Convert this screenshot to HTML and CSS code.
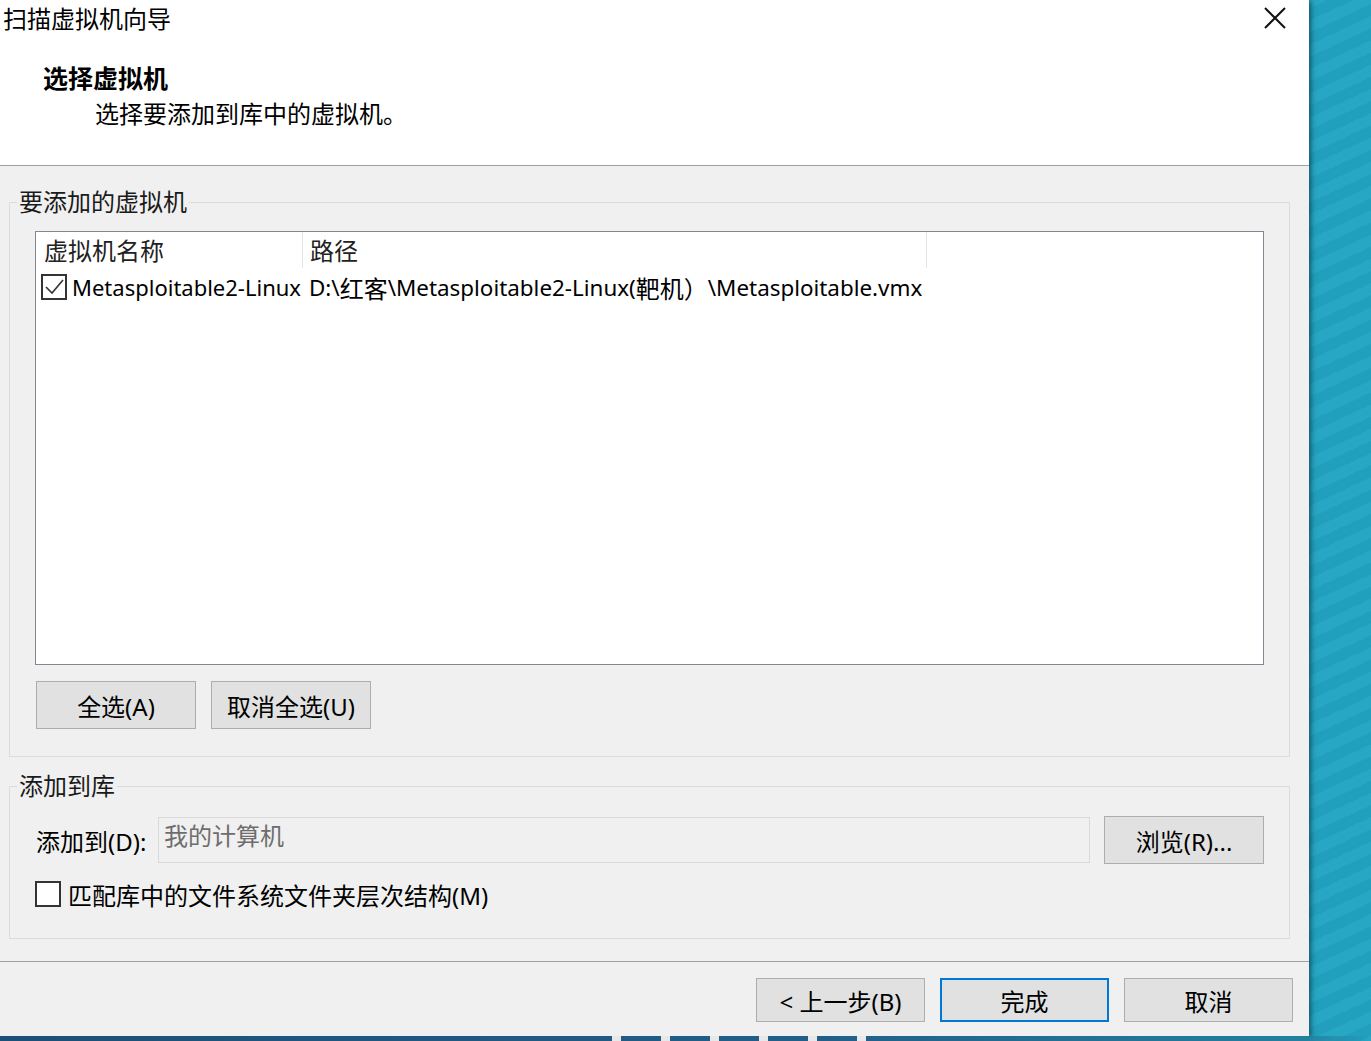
FILE: index.html
```html
<!DOCTYPE html>
<html lang="zh-CN">
<head>
    <meta charset="UTF-8">
    <title>扫描虚拟机向导</title>
    <link rel="stylesheet" href="styles.css">
</head>
<body>
    <div class="screen">
        <div class="dialog">
            <div class="header">
                <div class="titlebar">
                    <span class="title">扫描虚拟机向导</span>
                    <svg class="close" width="22" height="22" viewBox="0 0 22 22">
                        <path d="M1 1 L21 21 M21 1 L1 21" stroke="#111" stroke-width="2" fill="none"/>
                    </svg>
                </div>
                <div class="heading">选择虚拟机</div>
                <div class="subheading">选择要添加到库中的虚拟机。</div>
            </div>

            <div class="content">
                <!-- 要添加的虚拟机 -->
                <fieldset class="group group-vms">
                    <legend>要添加的虚拟机</legend>
                    <div class="listview">
                        <div class="list-row list-head">
                            <div class="col col-name">虚拟机名称</div>
                            <div class="col col-path">路径</div>
                        </div>
                        <div class="list-row list-item">
                            <div class="col col-name">
                                <span class="check">
                                    <svg width="22" height="22" viewBox="0 0 22 22">
                                        <path d="M3 11 L9 17 L20 4" stroke="#333" stroke-width="1.6" fill="none"/>
                                    </svg>
                                </span>
                                Metasploitable2-Linux
                            </div>
                            <div class="col col-path">D:\<span class="cjk">红客</span>\Metasploitable2-Linux(<span class="cjk">靶机）</span>\Metasploitable.vmx</div>
                        </div>
                    </div>
                    <div class="btn-row">
                        <button class="btn">全选(A)</button>
                        <button class="btn">取消全选(U)</button>
                    </div>
                </fieldset>

                <!-- 添加到库 -->
                <fieldset class="group group-lib">
                    <legend>添加到库</legend>
                    <div class="field-row">
                        <label class="field-label">添加到(D):</label>
                        <div class="field-input">我的计算机</div>
                        <button class="btn">浏览(R)...</button>
                    </div>
                    <div class="check-row">
                        <span class="check"></span>
                        匹配库中的文件系统文件夹层次结构(M)
                    </div>
                </fieldset>
            </div>

            <div class="footer">
                <button class="btn btn-wide">&lt; 上一步(B)</button>
                <button class="btn btn-wide btn-default">完成</button>
                <button class="btn btn-wide">取消</button>
            </div>
        </div>
        <div class="peek">
            <span></span><span></span><span></span><span></span><span></span><span></span>
        </div>
    </div>
</body>
</html>
```

FILE: styles.css
```css
body {
    margin: 0;
    font-family: "Noto Sans", "Noto Sans CJK SC", sans-serif;
    font-size: 24px;
    color: #000;
}
.screen {
    width: 1371px;
    height: 1041px;
    overflow: hidden;
    background: repeating-linear-gradient(155deg, #27a7c4 0 11px, #219fbc 11px 22px);
}
.dialog {
    width: 1309px;
    height: 1036px;
    background: #f0f0f0;
    display: flex;
    flex-direction: column;
    box-shadow: 2px 1px 5px rgba(10, 50, 70, 0.7);
}
.header {
    height: 165px;
    background: #fff;
    border-bottom: 1px solid #a0a0a0;
}
.titlebar {
    display: flex;
    justify-content: space-between;
    align-items: center;
    padding: 4px 23px 0 3px;
    height: 30px;
}
.title {
    font-size: 24px;
    line-height: 30px;
}
.close {
    margin-top: -2px;
}
.heading {
    margin: 29px 0 0 43px;
    font-size: 25px;
    font-weight: bold;
    line-height: 30px;
}
.subheading {
    margin: 6px 0 0 95px;
    line-height: 30px;
}
.content {
    flex: 1;
    padding: 0 19px 0 9px;
}
.group {
    margin: 0;
    border: 1px solid #dcdcdc;
    padding: 0 25px;
}
.group legend {
    padding: 0 2px;
    margin-left: -18px;
    line-height: 28px;
    color: #1a1a1a;
}
.group-vms {
    margin-top: 22px;
    padding-top: 15px;
    padding-bottom: 27px;
}
.listview {
    height: 432px;
    background: #fff;
    border: 1px solid #828790;
}
.list-row {
    display: grid;
    grid-template-columns: 267px 624px;
}
.list-head .col {
    height: 36px;
    line-height: 38px;
    padding-left: 8px;
    border-right: 1px solid #e5e5e5;
    color: #222;
}
.list-head .col-path {
    padding-left: 7px;
}
.list-item .col {
    height: 38px;
    display: flex;
    align-items: center;
    white-space: nowrap;
    font-size: 22px;
}
.list-item .col-name {
    padding-left: 5px;
}
.list-item .col-path {
    padding-left: 6px;
    font-size: 22.4px;
}
.cjk {
    font-size: 24px;
}
.check {
    width: 22px;
    height: 22px;
    border: 2px solid #333;
    background: #fff;
    display: inline-block;
    margin-right: 5px;
    flex: none;
}
.check svg {
    display: block;
}
.btn-row {
    display: flex;
    gap: 15px;
    margin-top: 16px;
    margin-left: 1px;
}
.btn {
    font-family: inherit;
    font-size: 24px;
    color: #000;
    width: 160px;
    height: 48px;
    background: #e1e1e1;
    border: 1px solid #adadad;
    padding: 0;
}
.group-lib {
    margin-top: 15px;
    padding-top: 16px;
    padding-bottom: 29px;
}
.field-row {
    display: flex;
    align-items: center;
    margin-left: 1px;
}
.field-label {
    width: 122px;
    flex: none;
}
.field-input {
    flex: 1;
    height: 46px;
    border: 1px solid #d9d9d9;
    color: #6d6d6d;
    padding: 1px 0 0 5px;
    box-sizing: border-box;
    line-height: 34px;
    margin-right: 14px;
}
.check-row {
    display: flex;
    align-items: center;
    height: 30px;
    margin-top: 15px;
}
.check-row .check {
    margin-right: 7px;
}
.footer {
    height: 75px;
    border-top: 1px solid #a0a0a0;
    display: flex;
    justify-content: flex-end;
    gap: 15px;
    padding: 16px 16px 0 0;
    box-sizing: border-box;
}
.btn-wide {
    width: 169px;
    height: 44px;
}
.btn-default {
    border: 2px solid #0078d7;
}
.peek {
    height: 5px;
    display: flex;
    gap: 40px;
    padding-left: 612px;
    background: linear-gradient(90deg, #1d4f78, #225f88 60%, #23809f 95%, rgba(35, 144, 178, 0));
}
.peek span {
    width: 9px;
    background: #e8e8e8;
}
```
